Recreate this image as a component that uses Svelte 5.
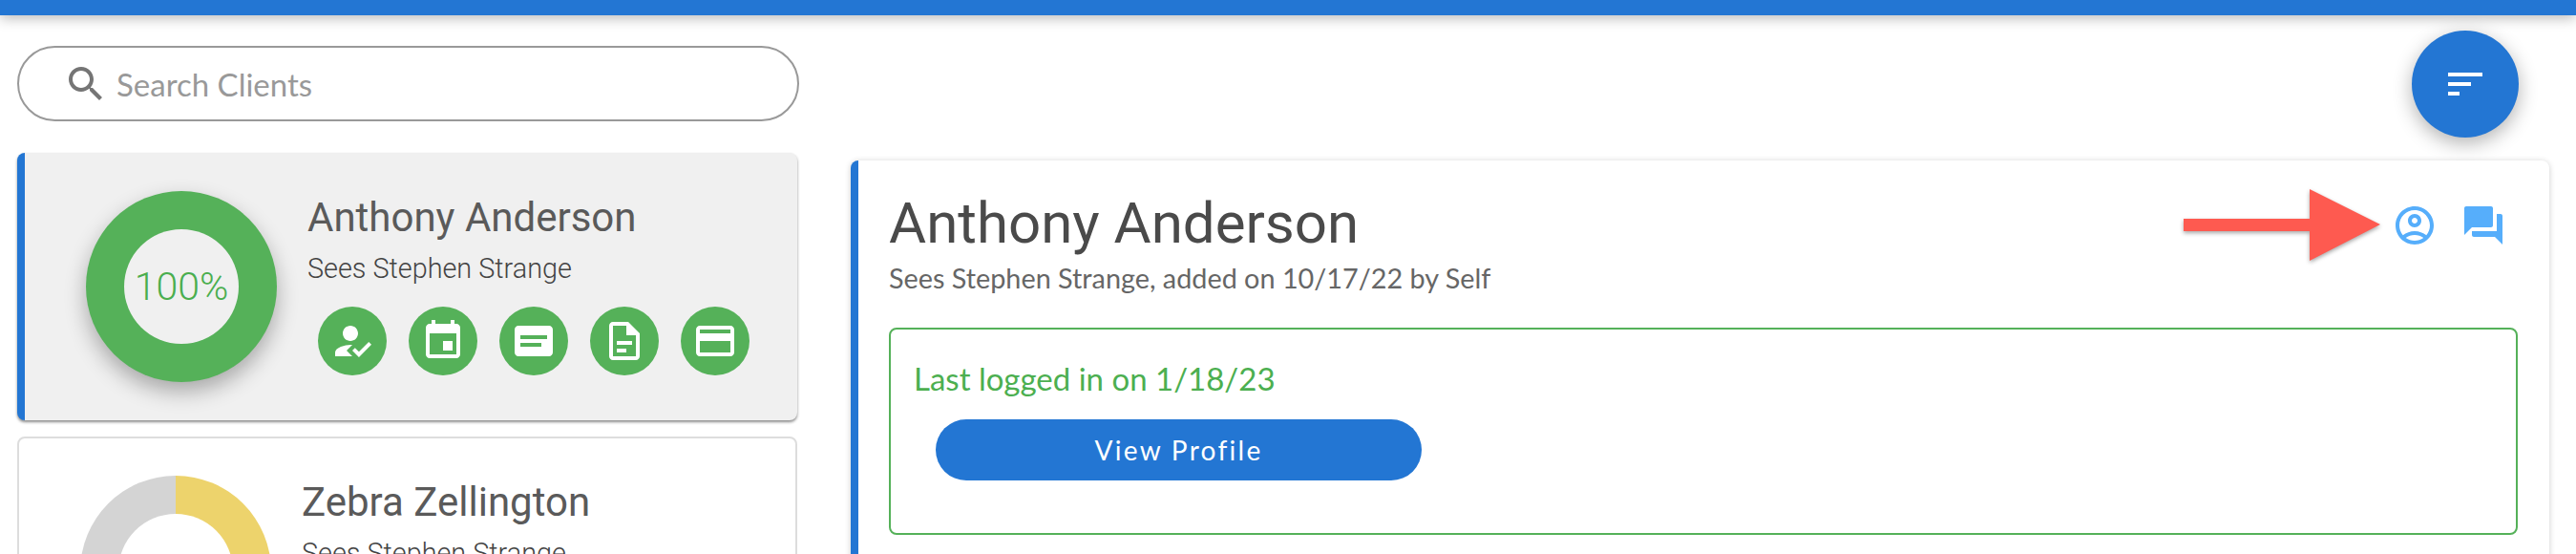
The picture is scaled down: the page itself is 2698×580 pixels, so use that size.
<script lang="ts">
  const statusIcons = [
    "M9 17l3-2.94c-.39-.04-.68-.06-1-.06-2.67 0-8 1.34-8 4v2h9l-3-3zm2-5c2.21 0 4-1.79 4-4s-1.79-4-4-4-4 1.79-4 4 1.79 4 4 4zM15.47 20.5L12 17l1.4-1.41 2.07 2.08 5.13-5.17 1.4 1.41z",
    "M17 12h-5v5h5v-5zM16 1v2H8V1H6v2H5c-1.11 0-1.99.9-1.99 2L3 19c0 1.1.89 2 2 2h14c1.1 0 2-.9 2-2V5c0-1.1-.9-2-2-2h-1V1h-2zm3 18H5V8h14v11z",
    "M20 4H4c-1.1 0-2 .9-2 2v12c0 1.1.9 2 2 2h16c1.1 0 2-.9 2-2V6c0-1.1-.9-2-2-2zM5 9h14v2H5zm0 4h11v2H5z",
    "M8 12h8v2H8zm0 4h5v2H8zm6-14H6c-1.1 0-2 .9-2 2v16c0 1.1.89 2 1.99 2H18c1.1 0 2-.9 2-2V8l-6-6zm4 18H6V4h7v5h5v11z",
    "M20 4H4c-1.11 0-1.99.89-1.99 2L2 18c0 1.11.89 2 2 2h16c1.11 0 2-.89 2-2V6c0-1.11-.89-2-2-2zm0 14H4v-6h16v6zm0-10H4V6h16v2z",
  ];
</script>

<div class="page">
  <div class="topbar"></div>

  <div class="columns">
    <div class="left">
      <div class="search">
        <svg class="search-icon" viewBox="0 0 24 24" width="48" height="48">
          <path d="M15.5 14h-.79l-.28-.27C15.41 12.59 16 11.11 16 9.5 16 5.91 13.09 3 9.5 3S3 5.91 3 9.5 5.91 16 9.5 16c1.61 0 3.09-.59 4.23-1.57l.27.28v.79l5 4.99L20.49 19l-4.99-5zm-6 0C7.01 14 5 11.99 5 9.5S7.01 5 9.5 5 14 7.01 14 9.5 11.99 14 9.5 14z" />
        </svg>
        <span class="placeholder">Search Clients</span>
      </div>

      <div class="client selected">
        <div class="donut full"><span class="hole">100%</span></div>
        <div class="info">
          <div class="name">Anthony Anderson</div>
          <div class="sees">Sees Stephen Strange</div>
          <div class="status">
            {#each statusIcons as d}
              <span class="badge">
                <svg viewBox="0 0 24 24" width="48" height="48" fill-rule="evenodd"><path {d} /></svg>
              </span>
            {/each}
          </div>
        </div>
      </div>

      <div class="client">
        <div class="donut half"><span class="hole"></span></div>
        <div class="info">
          <div class="name">Zebra Zellington</div>
          <div class="sees">Sees Stephen Strange</div>
        </div>
      </div>
    </div>

    <div class="right">
      <button class="fab" aria-label="Sort">
        <svg viewBox="0 0 24 24" width="48" height="48"><path d="M3 18h6v-2H3v2zM3 6v2h18V6H3zm0 7h12v-2H3v2z" /></svg>
      </button>

      <div class="panel">
        <div class="panel-head">
          <div>
            <h1>Anthony Anderson</h1>
            <p class="added">Sees Stephen Strange, added on 10/17/22 by Self</p>
          </div>
          <div class="actions">
            <svg viewBox="0 0 24 24" width="48" height="48">
              <path d="M12 2C6.48 2 2 6.48 2 12s4.48 10 10 10 10-4.48 10-10S17.52 2 12 2zM7.35 18.5C8.66 17.56 10.26 17 12 17s3.34.56 4.65 1.5C15.34 19.44 13.74 20 12 20s-3.34-.56-4.65-1.5zm10.79-1.38C16.45 15.8 14.32 15 12 15s-4.45.8-6.14 2.12C4.7 15.73 4 13.95 4 12c0-4.42 3.58-8 8-8s8 3.58 8 8c0 1.95-.7 3.73-1.86 5.12zM12 6c-1.93 0-3.5 1.57-3.5 3.5S10.07 13 12 13s3.5-1.57 3.5-3.5S13.93 6 12 6zm0 5c-.83 0-1.5-.67-1.5-1.5S11.17 8 12 8s1.5.67 1.5 1.5S12.83 11 12 11z" />
            </svg>
            <svg viewBox="0 0 24 24" width="48" height="48">
              <path d="M21 6h-2v9H6v2c0 .55.45 1 1 1h11l4 4V7c0-.55-.45-1-1-1zm-4 6V3c0-.55-.45-1-1-1H3c-.55 0-1 .45-1 1v14l4-4h10c.55 0 1-.45 1-1z" />
            </svg>
          </div>
          <svg class="arrow" viewBox="0 0 216 85" width="216" height="85">
            <path d="M0 31h132V0l74 37-74 38V44H0z" />
          </svg>
        </div>

        <div class="login">
          <div class="login-text">Last logged in on 1/18/23</div>
          <button class="profile">View Profile</button>
        </div>
      </div>
    </div>
  </div>
</div>

<style>
  :global(body) {
    background: #fff;
  }
  .page {
    height: 580px;
    overflow: hidden;
    font-family: "Roboto", sans-serif;
  }
  .topbar {
    height: 16px;
    background: #2376d3;
    box-shadow: 0 3px 14px rgba(0, 0, 0, 0.28);
    position: relative;
  }
  .columns {
    display: grid;
    grid-template-columns: 819px 1779px;
    column-gap: 54px;
    padding-left: 18px;
  }
  .left {
    display: flex;
    flex-direction: column;
    gap: 17px;
    padding-top: 32px;
  }
  .search {
    display: flex;
    align-items: center;
    height: 79px;
    box-sizing: border-box;
    margin-bottom: 16px;
    padding-left: 46px;
    border: 2px solid #999;
    border-radius: 40px;
    gap: 8px;
  }
  .search-icon {
    fill: #757575;
  }
  .placeholder {
    font-family: "Lato", sans-serif;
    font-size: 33px;
    color: #999;
  }
  .client {
    display: flex;
    gap: 32px;
    box-sizing: border-box;
    width: 817px;
    height: 280px;
    padding: 39px 0 0 64px;
    background: #fff;
    border: 2px solid #ddd;
    border-radius: 8px;
  }
  .client.selected {
    width: 817px;
    padding: 40px 0 0 64px;
    background: #f0f0f0;
    border: none;
    border-left: 8px solid #2376d3;
    box-shadow: 0 2px 3px rgba(0, 0, 0, 0.45);
  }
  .donut {
    flex: none;
    display: flex;
    align-items: center;
    justify-content: center;
    width: 200px;
    height: 200px;
    border-radius: 50%;
  }
  .donut.full {
    background: #55b159;
    box-shadow: 0 10px 22px rgba(0, 0, 0, 0.3);
  }
  .donut.half {
    background: conic-gradient(#edd36c 0 50%, #d4d4d4 50% 100%);
  }
  .hole {
    display: flex;
    align-items: center;
    justify-content: center;
    width: 120px;
    height: 120px;
    border-radius: 50%;
    background: #fff;
    font-size: 41px;
    font-weight: 300;
    color: #4aae4e;
  }
  .selected .hole {
    background: #f0f0f0;
  }
  .info {
    padding-top: 4px;
  }
  .name {
    font-size: 42px;
    line-height: 48px;
    color: #5a5a5a;
  }
  .sees {
    margin-top: 13px;
    font-size: 28.8px;
    font-weight: 300;
    line-height: 32px;
    color: #444;
  }
  .status {
    display: flex;
    gap: 23px;
    margin: 24px 0 0 11px;
  }
  .badge {
    display: flex;
    align-items: center;
    justify-content: center;
    width: 72px;
    height: 72px;
    border-radius: 50%;
    background: #55b159;
  }
  .badge svg {
    fill: #fff;
  }
  .right {
    display: flex;
    flex-direction: column;
    padding-top: 16px;
  }
  .fab {
    align-self: flex-end;
    display: flex;
    align-items: center;
    justify-content: center;
    width: 112px;
    height: 112px;
    margin: 0 32px 24px 0;
    padding: 0;
    border: none;
    border-radius: 50%;
    background: #2376d3;
    box-shadow: 0 6px 20px rgba(0, 0, 0, 0.3);
  }
  .fab svg {
    fill: #fff;
  }
  .panel {
    box-sizing: border-box;
    height: 500px;
    padding: 0 45px 0 32px;
    border-left: 8px solid #2376d3;
    border-radius: 8px;
    background: #fff;
    box-shadow: 0 1px 6px rgba(0, 0, 0, 0.2);
  }
  .panel-head {
    position: relative;
    display: flex;
    justify-content: space-between;
    padding-top: 30px;
  }
  h1 {
    margin: 0;
    font-size: 60px;
    font-weight: 400;
    line-height: 72px;
    color: #4a4a4a;
  }
  .added {
    margin: 5px 0 0;
    font-family: "Lato", sans-serif;
    font-size: 28.8px;
    line-height: 32px;
    color: #666;
  }
  .actions {
    display: flex;
    gap: 24px;
    margin-top: 14px;
    height: 48px;
  }
  .actions svg {
    fill: #56aefb;
  }
  .arrow {
    position: absolute;
    top: 30px;
    right: 122px;
    fill: #fe5a50;
    filter: drop-shadow(0 2px 2px rgba(0, 0, 0, 0.35));
  }
  .login {
    box-sizing: border-box;
    height: 217px;
    margin: 36px -12px 0 0;
    padding: 31px 24px 0;
    border: 2px solid #55b159;
    border-radius: 8px;
  }
  .login-text {
    font-family: "Lato", sans-serif;
    font-size: 33px;
    line-height: 40px;
    color: #4caf50;
  }
  .profile {
    display: block;
    width: 509px;
    height: 64px;
    margin: 23px 0 0 23px;
    border: none;
    border-radius: 32px;
    background: #2376d3;
    color: #fff;
    font-family: "Lato", sans-serif;
    font-size: 28px;
    letter-spacing: 2.3px;
  }
</style>
